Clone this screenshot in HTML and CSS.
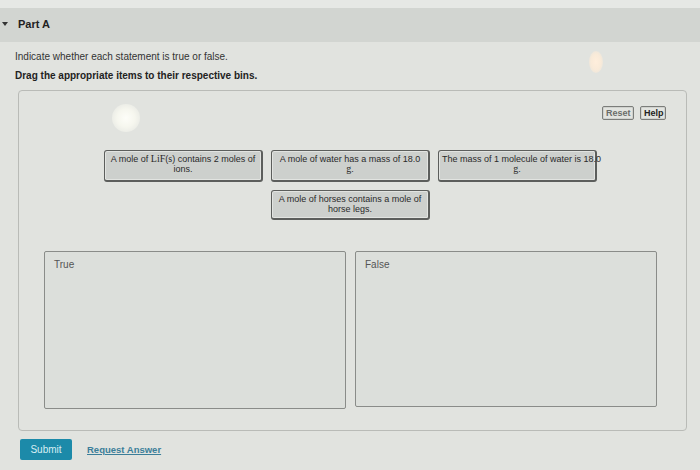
FILE: index.html
```html
<!DOCTYPE html>
<html>
<head>
<meta charset="utf-8">
<link rel="stylesheet" href="styles.css">
</head>
<body>
<div class="topstrip"></div>
<div class="partbar">
  <span class="caret"></span>
  <span class="parttitle">Part A</span>
</div>
<div class="content">
  <p class="instr">Indicate whether each statement is true or false.</p>
  <p class="instr bold">Drag the appropriate items to their respective bins.</p>
  <div class="panel">
    <div class="tools">
      <button class="tbtn reset">Reset</button>
      <button class="tbtn help">Help</button>
    </div>
    <div class="items">
      <div class="card">A mole of <span class="serif">LiF</span>(<span class="serif">s</span>) contains 2 moles of ions.</div>
      <div class="card">A mole of water has a mass of 18.0 <span class="serif">g</span>.</div>
      <div class="card nowrap">The mass of 1 molecule of water is 18.0<br><span class="serif">g</span>.</div>
      <div class="card short">A mole of horses contains a mole of horse legs.</div>
    </div>
    <div class="bins">
      <div class="bin"><span class="binlabel">True</span></div>
      <div class="bin"><span class="binlabel">False</span></div>
    </div>
  </div>
  <div class="actions">
    <button class="submit">Submit</button>
    <a class="reqlink" href="#">Request Answer</a>
  </div>
</div>
<div class="glare g1"></div>
<div class="glare g2"></div>
</body>
</html>
```
FILE: styles.css
```css
html, body {
  margin: 0;
  padding: 0;
}
body {
  width: 700px;
  height: 470px;
  overflow: hidden;
  background: #e1e3df;
  font-family: "Liberation Sans", Arial, sans-serif;
  color: #2a2a2a;
  position: relative;
}
.topstrip {
  height: 8px;
  background: #e6e8e5;
}
.partbar {
  height: 34px;
  background: #d2d5d1;
  display: flex;
  align-items: center;
  padding-left: 2px;
}
.caret {
  width: 0;
  height: 0;
  border-left: 3px solid transparent;
  border-right: 3px solid transparent;
  border-top: 4px solid #333;
  margin-top: -2px;
}
.parttitle {
  margin-left: 10px;
  font-size: 11px;
  font-weight: bold;
  color: #222;
  margin-top: -3px;
}
.content {
  padding-left: 15px;
}
.instr {
  margin: 0;
  font-size: 10px;
  line-height: 12px;
  color: #333;
}
.instr:first-child {
  margin-top: 9px;
}
.instr.bold {
  font-weight: bold;
  margin-top: 7px;
  color: #222;
}
.panel {
  margin-top: 8px;
  margin-left: 3px;
  width: 669px;
  height: 341px;
  box-sizing: border-box;
  border: 1px solid #b9bbb7;
  border-radius: 4px;
  padding: 15px 29px 0 25px;
  display: flex;
  flex-direction: column;
}
.tools {
  display: flex;
  justify-content: flex-end;
  gap: 6px;
  margin-right: -9px;
}
.tbtn {
  font-family: "Liberation Sans", Arial, sans-serif;
  font-size: 9px;
  font-weight: bold;
  height: 14px;
  padding: 0 3px;
  line-height: 10px;
  background: #e2e4e0;
  border: 1px solid #7b7d7a;
  border-radius: 2px;
  box-shadow: inset 0 0 0 1px #d0d2ce;
}
.reset {
  color: #6a6c69;
  width: 32px;
}
.help {
  color: #222;
  width: 26px;
}
.items {
  width: 496px;
  margin: 30px auto 0;
  display: flex;
  flex-wrap: wrap;
  justify-content: center;
  gap: 8px 8px;
}
.card {
  width: 159px;
  height: 32px;
  box-sizing: border-box;
  background: #cdd0cd;
  border: 1px solid #5c5e5c;
  border-right-width: 2px;
  border-bottom-width: 2px;
  border-radius: 3px;
  box-shadow: inset 0 0 0 1px #e2e4e1;
  font-size: 9px;
  line-height: 10px;
  text-align: center;
  color: #2a2a2a;
  padding: 3px 3px 0;
}
.card.nowrap {
  white-space: nowrap;
}
.card.short {
  height: 30px;
}
.serif {
  font-family: "Liberation Serif", "Times New Roman", serif;
  font-size: 10px;
}
.bins {
  display: flex;
  gap: 9px;
  margin-top: 31px;
}
.bin {
  flex: 1;
  height: 158px;
  box-sizing: border-box;
  border: 1px solid #8a8c89;
  border-radius: 2px;
  background: #dcdfdb;
  padding: 2px 9px;
}
.bin + .bin {
  height: 156px;
}
.binlabel {
  font-size: 10px;
  color: #555;
}
.actions {
  display: flex;
  align-items: center;
  margin-top: 8px;
  margin-left: 5px;
  gap: 15px;
}
.submit {
  width: 52px;
  height: 21px;
  border: none;
  border-radius: 2px;
  background: #1c8aa9;
  color: #d7eef3;
  font-family: "Liberation Sans", Arial, sans-serif;
  font-size: 10px;
  padding: 0;
}
.reqlink {
  font-size: 9.5px;
  font-weight: bold;
  color: #3b7e99;
  text-decoration: underline;
}
.glare {
  position: absolute;
  border-radius: 50%;
  pointer-events: none;
}
.g1 {
  left: 112px;
  top: 104px;
  width: 28px;
  height: 28px;
  background: radial-gradient(circle, rgba(255,255,250,0.95) 0%, rgba(255,255,245,0.7) 45%, rgba(255,255,245,0) 100%);
}
.g2 {
  left: 589px;
  top: 51px;
  width: 14px;
  height: 22px;
  background: radial-gradient(ellipse, rgba(255,238,220,1) 0%, rgba(255,236,215,0.8) 50%, rgba(255,236,215,0) 100%);
}
```
